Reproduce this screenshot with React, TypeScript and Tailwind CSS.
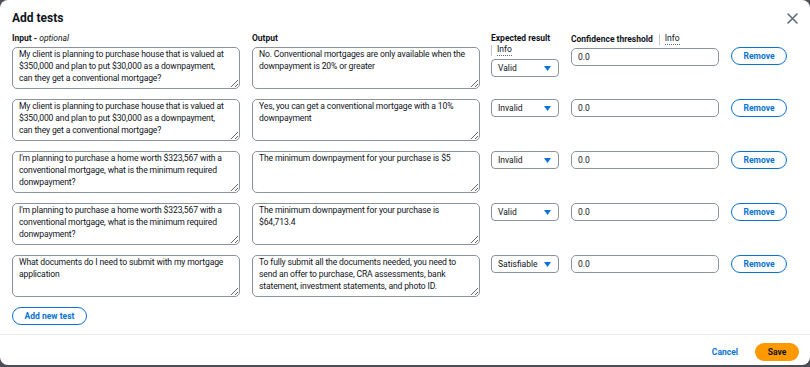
import React from 'react';

type TestRow = {
  input: string;
  output: string;
  result: string;
  threshold: string;
};

const rows: TestRow[] = [
  {
    input:
      'My client is planning to purchase house that is valued at\n$350,000 and plan to put $30,000 as a downpayment,\ncan they get a conventional mortgage?',
    output: 'No. Conventional mortgages are only available when the\ndownpayment is 20% or greater',
    result: 'Valid',
    threshold: '0.0',
  },
  {
    input:
      'My client is planning to purchase house that is valued at\n$350,000 and plan to put $30,000 as a downpayment,\ncan they get a conventional mortgage?',
    output: 'Yes, you can get a conventional mortgage with a 10%\ndownpayment',
    result: 'Invalid',
    threshold: '0.0',
  },
  {
    input:
      "I'm planning to purchase a home worth $323,567 with a\nconventional mortgage, what is the minimum required\ndonwpayment?",
    output: 'The minimum downpayment for your purchase is $5',
    result: 'Invalid',
    threshold: '0.0',
  },
  {
    input:
      "I'm planning to purchase a home worth $323,567 with a\nconventional mortgage, what is the minimum required\ndonwpayment?",
    output: 'The minimum downpayment for your purchase is\n$64,713.4',
    result: 'Valid',
    threshold: '0.0',
  },
  {
    input: 'What documents do I need to submit with my mortgage\napplication',
    output:
      'To fully submit all the documents needed, you need to\nsend an offer to purchase, CRA assessments, bank\nstatement, investment statements, and photo ID.',
    result: 'Satisfiable',
    threshold: '0.0',
  },
];

function Label({ children }: { children: React.ReactNode }) {
  return <div className="text-[8.5px] leading-[11px] font-bold text-[#0f141a] mb-[3px] whitespace-nowrap">{children}</div>;
}

function InfoLink() {
  return (
    <span className="flex items-center">
      <span className="w-px h-[11px] bg-[#c6c6cd] mr-[5px]" />
      <span className="text-[8.5px] leading-[11px] text-[#0f141a] border-b border-dotted border-[#5f6b7a]">Info</span>
    </span>
  );
}

function Field({ value }: { value: string }) {
  return (
    <textarea
      readOnly
      defaultValue={value}
      className="w-full h-[42px] block rounded-[5px] border border-[#8c939d] bg-white px-[6px] pt-0 text-[8.6px] tracking-[-0.15px] leading-[12px] text-[#0f141a] whitespace-pre overflow-hidden resize-y outline-none"
    />
  );
}

function ResultSelect({ value }: { value: string }) {
  return (
    <div className="w-[68px] h-[18px] rounded-[4px] border border-[#8c939d] bg-white flex items-center justify-between pl-[6px] pr-[7px]">
      <span className="text-[8.5px] text-[#0f141a]">{value}</span>
      <svg width="7" height="5" viewBox="0 0 7 5">
        <path d="M0 0 H7 L3.5 5 Z" fill="#0972d3" />
      </svg>
    </div>
  );
}

function ThresholdInput({ value }: { value: string }) {
  return (
    <div className="w-[148px] h-[18px] rounded-[5px] border border-[#8c939d] bg-white flex items-center px-[6px]">
      <span className="text-[8.5px] text-[#0f141a]">{value}</span>
    </div>
  );
}

function RemoveButton() {
  return (
    <button className="w-[56px] h-[18px] rounded-full border-[1.5px] border-[#0972d3] text-[8.5px] font-bold text-[#0972d3] flex items-center justify-center">
      Remove
    </button>
  );
}

function Row({ row, first }: { row: TestRow; first: boolean }) {
  return (
    <div className="flex items-start">
      <div className="w-[228px]">
        {first && (
          <Label>
            Input - <i className="font-normal">optional</i>
          </Label>
        )}
        <Field value={row.input} />
      </div>
      <div className="w-[228px] ml-[12px]">
        {first && <Label>Output</Label>}
        <Field value={row.output} />
      </div>
      <div className="w-[68px] ml-[11px]">
        {first && (
          <div className="mb-[3px]">
            <div className="text-[8.5px] leading-[11px] font-bold text-[#0f141a] whitespace-nowrap">Expected result</div>
            <InfoLink />
          </div>
        )}
        <ResultSelect value={row.result} />
      </div>
      <div className="w-[148px] ml-[12px]">
        {first && (
          <div className="flex items-center gap-[6px] mb-[3px]">
            <span className="text-[8.5px] leading-[11px] font-bold text-[#0f141a] whitespace-nowrap">Confidence threshold</span>
            <InfoLink />
          </div>
        )}
        <ThresholdInput value={row.threshold} />
      </div>
      <div className={first ? 'ml-[12px] pt-[14px]' : 'ml-[12px]'}>
        <RemoveButton />
      </div>
    </div>
  );
}

export default function App() {
  return (
    <div className="w-[810px] h-[367px] bg-[#4b4f55] overflow-hidden" style={{ fontFamily: 'Roboto, "Liberation Sans", sans-serif' }}>
      <div className="h-[365px] bg-white rounded-[8px] flex flex-col">
        <div className="flex items-center justify-between pl-[12px] pr-[12px] pt-[9px] h-[27px]">
          <h2 className="text-[12px] leading-[18px] font-bold text-[#0f141a]">Add tests</h2>
          <svg width="11" height="11" viewBox="0 0 11 11">
            <path d="M1 1 L10 10 M10 1 L1 10" stroke="#5f6b7a" strokeWidth="1.6" strokeLinecap="round" />
          </svg>
        </div>
        <div className="px-[12px] pt-[6px] flex flex-col gap-[10px]">
          {rows.map((r, i) => (
            <Row key={i} row={r} first={i === 0} />
          ))}
        </div>
        <div className="px-[12px] pt-[10px] pb-[9px]">
          <button className="w-[75px] h-[18px] rounded-full border-[1.5px] border-[#0972d3] text-[8.5px] font-bold text-[#0972d3] flex items-center justify-center">
            Add new test
          </button>
        </div>
        <div className="h-px bg-[#e9ebed]" />
        <div className="flex items-center justify-end gap-[17px] pr-[11px] pt-[8px]">
          <button className="text-[8.5px] font-bold text-[#0972d3]">Cancel</button>
          <button className="w-[44px] h-[18px] rounded-full bg-[#ff9900] text-[8.5px] font-bold text-[#0f141a]">Save</button>
        </div>
      </div>
    </div>
  );
}
